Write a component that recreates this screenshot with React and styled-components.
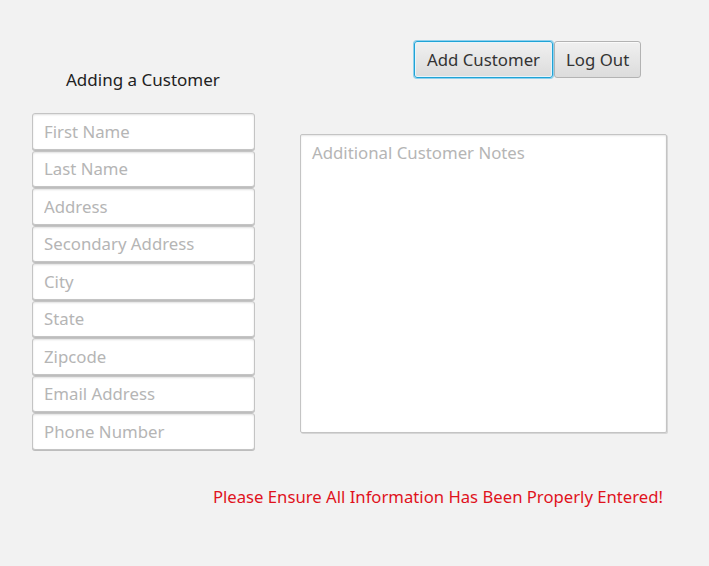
import React from 'react';
import styled, { createGlobalStyle } from 'styled-components';

const GlobalStyle = createGlobalStyle`
    html, body {
        margin: 0;
        padding: 0;
        background: #f2f2f2;
    }
    * {
        box-sizing: border-box;
    }
`

const FONT = `"Noto Sans", "Open Sans", sans-serif`;

const Page = styled.div`
    width: 709px;
    height: 566px;
    padding: 41px 42px 0 32px;
    font-family: ${FONT};
    display: grid;
    grid-template-columns: 223px 367px;
    align-content: start;
    column-gap: 45px;
`

const LeftColumn = styled.div`
    display: flex;
    flex-direction: column;
    padding-top: 28px;
`

const Title = styled.div`
    font-size: 17px;
    line-height: 22px;
    color: #222;
    padding-left: 34px;
    margin-bottom: 22px;
`

const Fields = styled.div`
    display: flex;
    flex-direction: column;
    gap: 1px;
`

const Field = styled.input`
    width: 223px;
    height: 36.5px;
    padding: 0 11px;
    font-family: ${FONT};
    font-size: 16.8px;
    color: #333;
    background: #fff;
    border: 1px solid #c4c4c4;
    border-radius: 3px;
    box-shadow: inset 0 1px 2px rgba(0, 0, 0, 0.12), 0 1px 0 #bdbdbd;
    outline: none;
    &::placeholder {
        color: #b5b5b5;
    }
`

const RightColumn = styled.div`
    display: flex;
    flex-direction: column;
`

const Toolbar = styled.div`
    display: flex;
    gap: 1px;
    padding-left: 114px;
    margin-bottom: 56px;
`

const Button = styled.button`
    height: 37px;
    padding: 0 ${p => (p.$focused ? '12px' : '11px')};
    font-family: ${FONT};
    font-size: 16.8px;
    color: #333;
    background: linear-gradient(#f0f0f0, #dcdcdc);
    border: 1px solid ${p => (p.$focused ? '#1fa3d6' : '#b3b3b3')};
    border-radius: 3px;
    box-shadow: ${p => (p.$focused ? '0 0 0 1px #8fd0ec, inset 0 0 0 1px #e6f4fa' : 'inset 0 1px 0 #fafafa')};
    cursor: pointer;
`

const Notes = styled.textarea`
    width: 367px;
    height: 299px;
    padding: 6px 11px;
    resize: none;
    font-family: ${FONT};
    font-size: 16.8px;
    color: #333;
    background: #fff;
    border: 1px solid #c4c4c4;
    border-radius: 2px;
    box-shadow: inset 0 1px 2px rgba(0, 0, 0, 0.1), 1px 1px 0 #d6d6d6;
    outline: none;
    &::placeholder {
        color: #b5b5b5;
    }
`

const ErrorText = styled.div`
    grid-column: 1 / span 2;
    justify-self: end;
    margin-top: 36px;
    margin-right: 4px;
    font-size: 16.7px;
    line-height: 22px;
    color: #e0131d;
`

const fields = [
    'First Name', 'Last Name', 'Address', 'Secondary Address', 'City',
    'State', 'Zipcode', 'Email Address', 'Phone Number'
];

const App = () => {
    return (
        <>
            <GlobalStyle />
            <Page>
                <LeftColumn>
                    <Title>Adding a Customer</Title>
                    <Fields>
                        {fields.map(name => (
                            <Field key={name} placeholder={name} />
                        ))}
                    </Fields>
                </LeftColumn>
                <RightColumn>
                    <Toolbar>
                        <Button $focused>Add Customer</Button>
                        <Button>Log Out</Button>
                    </Toolbar>
                    <Notes placeholder="Additional Customer Notes" />
                </RightColumn>
                <ErrorText>Please Ensure All Information Has Been Properly Entered!</ErrorText>
            </Page>
        </>
    );
}

export default App;
